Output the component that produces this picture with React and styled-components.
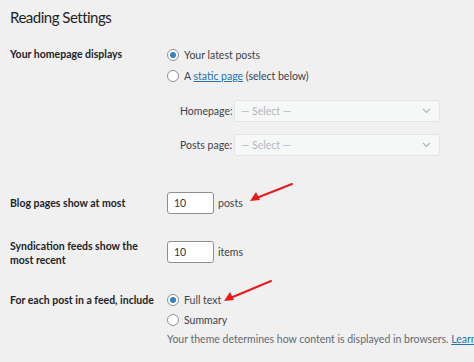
import React from "react";
import styled, { createGlobalStyle } from "styled-components";

const GlobalStyle = createGlobalStyle`
  html, body {
    margin: 0;
    padding: 0;
    background: #f0f0f1;
  }
  body {
    font-family: Lato, "Open Sans", sans-serif;
    color: #3c434a;
  }
`;

const Page = styled.div`
  width: 474px;
  height: 362px;
  overflow: hidden;
  padding: 0 0 0 10px;
  box-sizing: border-box;
  background: #f0f0f1;
`;

const Title = styled.h1`
  margin: 5px 0 15px;
  font-size: 15px;
  letter-spacing: -0.5px;
  line-height: 24px;
  font-weight: 400;
  color: #1d2327;
`;

const Row = styled.div`
  position: relative;
  display: flex;
  align-items: ${(p) => (p.$center ? "center" : "flex-start")};
  margin-top: ${(p) => p.$top || 0}px;
`;

const Label = styled.div`
  width: 157px;
  flex-shrink: 0;
  font-size: 10.5px;
  font-weight: 700;
  color: #1d2327;
  line-height: ${(p) => p.$lh || 20}px;
`;

const Field = styled.div`
  display: flex;
  flex-direction: column;
  font-size: 10.5px;
  color: #3c434a;
`;

const RadioLine = styled.label`
  display: flex;
  align-items: center;
  gap: 5px;
  height: ${(p) => p.$h || 21}px;
`;

const Radio = styled.span`
  width: 12px;
  height: 12px;
  box-sizing: border-box;
  border-radius: 50%;
  border: 1px solid #8c8f94;
  background: #fff;
  display: flex;
  align-items: center;
  justify-content: center;
  &::after {
    content: "";
    display: ${(p) => (p.$checked ? "block" : "none")};
    width: 6px;
    height: 6px;
    border-radius: 50%;
    background: #3582c4;
  }
`;

const Link = styled.a`
  color: #2271b1;
  text-decoration: underline;
`;

const SelectGroup = styled.div`
  display: flex;
  flex-direction: column;
  gap: 12px;
  margin-top: 14px;
  padding-left: 13px;
`;

const SelectRow = styled.div`
  display: flex;
  align-items: center;
`;

const SelectLabel = styled.span`
  width: 54px;
  white-space: nowrap;
  color: #3c434a;
`;

const Select = styled.div`
  width: 206px;
  height: 22px;
  box-sizing: border-box;
  border: 1px solid #e4e4e6;
  border-radius: 3px;
  background: #f6f7f7;
  color: #b4b7ba;
  display: flex;
  align-items: center;
  justify-content: space-between;
  padding: 0 8px 0 6px;
`;

const NumberRow = styled.div`
  display: flex;
  align-items: center;
  gap: 4px;
  margin-top: ${(p) => p.$top || 0}px;
`;

const NumberInput = styled.div`
  width: 47px;
  height: 22px;
  box-sizing: border-box;
  border: 1px solid #8c8f94;
  border-radius: 3px;
  background: #fff;
  color: #2c3338;
  display: flex;
  align-items: center;
  padding-left: 6px;
`;

const Description = styled.p`
  margin: 0;
  line-height: 20px;
  color: #646970;
  white-space: nowrap;
`;

const Arrow = styled.svg`
  position: absolute;
  left: ${(p) => p.$x}px;
  top: ${(p) => p.$y}px;
  overflow: visible;
`;

const RedArrow = ({ x, y, w, h }) => (
  <Arrow $x={x} $y={y} width={w} height={h} viewBox={`0 0 ${w} ${h}`}>
    <line x1={w} y1={0} x2={4} y2={h - 2} stroke="#e8191b" strokeWidth="2" strokeLinecap="round" />
    <polygon points={`0,${h} 6,${h - 9} 10,${h - 1}`} fill="#e8191b" />
  </Arrow>
);

const Chevron = () => (
  <svg width="9" height="6" viewBox="0 0 9 6">
    <path d="M1 1l3.5 3.5L8 1" fill="none" stroke="#b4b7ba" strokeWidth="1.2" />
  </svg>
);

export default function App() {
  return (
    <Page>
      <GlobalStyle />
      <Title>Reading Settings</Title>

      <Row>
        <Label $lh={21}>Your homepage displays</Label>
        <Field>
          <RadioLine>
            <Radio $checked />
            <span>Your latest posts</span>
          </RadioLine>
          <RadioLine>
            <Radio />
            <span>
              A <Link>static page</Link> (select below)
            </span>
          </RadioLine>
          <SelectGroup>
            <SelectRow>
              <SelectLabel>Homepage:</SelectLabel>
              <Select>
                <span>— Select —</span>
                <Chevron />
              </Select>
            </SelectRow>
            <SelectRow>
              <SelectLabel>Posts page:</SelectLabel>
              <Select>
                <span>— Select —</span>
                <Chevron />
              </Select>
            </SelectRow>
          </SelectGroup>
        </Field>
      </Row>

      <Row $center $top={36}>
        <Label>Blog pages show at most</Label>
        <Field>
          <NumberRow>
            <NumberInput>10</NumberInput>
            <span>posts</span>
          </NumberRow>
        </Field>
        <RedArrow x={240} y={-8} w={42} h={17} />
      </Row>

      <Row $top={25}>
        <Label $lh={14}>
          Syndication feeds show the
          <br />
          most recent
        </Label>
        <Field>
          <NumberRow $top={2}>
            <NumberInput>10</NumberInput>
            <span>items</span>
          </NumberRow>
        </Field>
      </Row>

      <Row $top={23}>
        <Label $lh={20}>For each post in a feed, include</Label>
        <Field>
          <RadioLine $h={20}>
            <Radio $checked />
            <span>Full text</span>
          </RadioLine>
          <RadioLine $h={19}>
            <Radio />
            <span>Summary</span>
          </RadioLine>
          <Description>
            Your theme determines how content is displayed in browsers.{" "}
            <Link>Learn more about feeds</Link>
          </Description>
        </Field>
        <RedArrow x={214} y={-9} w={47} h={20} />
      </Row>
    </Page>
  );
}
